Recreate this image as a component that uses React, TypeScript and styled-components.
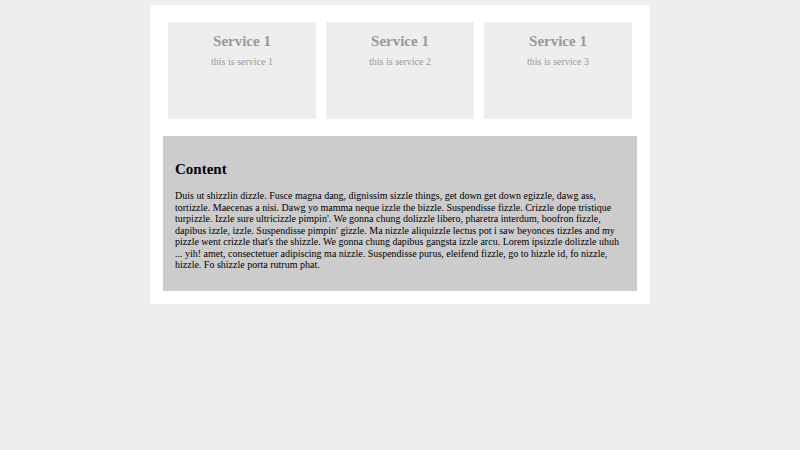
import React from "react";
import styled, { createGlobalStyle } from "styled-components";

const Global = createGlobalStyle`
  html, body { margin: 0; padding: 0; background: #eeeeee; }
  body { font-family: "Liberation Serif", "Times New Roman", serif; }
`;

const Page = styled.div`
  width: 500px;
  margin: 5px auto 0;
  background: #ffffff;
  padding: 17px 13px 13px;
  box-sizing: border-box;
`;

const Services = styled.div`
  display: flex;
  gap: 10px;
  margin: 0 5px;
`;

const Service = styled.div`
  width: 148px;
  height: 97px;
  background: #eeeeee;
  text-align: center;
  padding-top: 10px;
  box-sizing: border-box;
  color: #999999;
`;

const ServiceTitle = styled.div`
  font-size: 15px;
  font-weight: bold;
  line-height: 18px;
`;

const ServiceText = styled.div`
  font-size: 10px;
  line-height: 12px;
  margin-top: 6px;
`;

const Content = styled.div`
  margin-top: 17px;
  background: #cccccc;
  padding: 24px 12px 20px;
  color: #000;
`;

const Heading = styled.h3`
  margin: 0;
  font-size: 15px;
  line-height: 18px;
  font-weight: bold;
`;

const Text = styled.p`
  margin: 12px 0 0;
  font-size: 10px;
  line-height: 11.5px;
`;

const services = ["this is service 1", "this is service 2", "this is service 3"];

export default function App() {
  return (
    <>
      <Global />
      <Page>
        <Services>
          {services.map((s) => (
            <Service key={s}>
              <ServiceTitle>Service 1</ServiceTitle>
              <ServiceText>{s}</ServiceText>
            </Service>
          ))}
        </Services>
        <Content>
          <Heading>Content</Heading>
          <Text>
            Duis ut shizzlin dizzle. Fusce magna dang, dignissim sizzle things, get down get down egizzle, dawg ass,
            tortizzle. Maecenas a nisi. Dawg yo mamma neque izzle the bizzle. Suspendisse fizzle. Crizzle dope tristique
            turpizzle. Izzle sure ultricizzle pimpin'. We gonna chung dolizzle libero, pharetra interdum, boofron fizzle,
            dapibus izzle, izzle. Suspendisse pimpin' gizzle. Ma nizzle aliquizzle lectus pot i saw beyonces tizzles and my
            pizzle went crizzle that's the shizzle. We gonna chung dapibus gangsta izzle arcu. Lorem ipsizzle dolizzle uhuh
            ... yih! amet, consectetuer adipiscing ma nizzle. Suspendisse purus, eleifend fizzle, go to hizzle id, fo nizzle,
            hizzle. Fo shizzle porta rutrum phat.
          </Text>
        </Content>
      </Page>
    </>
  );
}
